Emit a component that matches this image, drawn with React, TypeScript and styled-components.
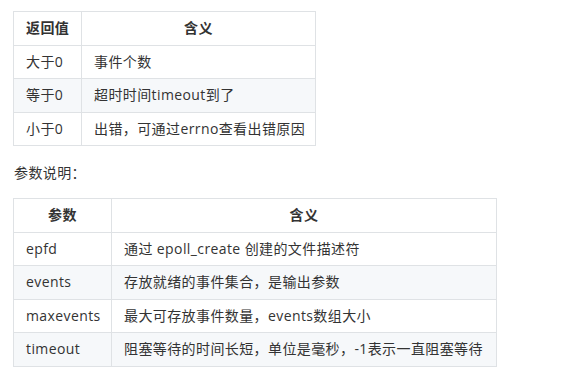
import React from "react";
import styled, { createGlobalStyle } from "styled-components";

const Global = createGlobalStyle`
  html, body { margin: 0; padding: 0; background: #ffffff; }
  body {
    font-family: "Open Sans", "Noto Sans CJK SC", sans-serif;
    font-size: 14px;
    letter-spacing: 0.4px;
    color: #333333;
  }
`;

const Page = styled.div`
  padding: 11px 0 0 13px;
  display: flex;
  flex-direction: column;
  align-items: flex-start;
`;

const Table = styled.table<{ $w: number }>`
  border-collapse: collapse;
  width: ${(p) => p.$w}px;
  table-layout: fixed;
`;

const Th = styled.th<{ $w?: number; $align?: string }>`
  ${(p) => (p.$w ? `width: ${p.$w}px;` : "")}
  border: 1px solid #dfe2e5;
  padding: 0 12px;
  height: 33.5px;
  box-sizing: border-box;
  font-weight: 700;
  text-align: ${(p) => p.$align || "center"};
  line-height: 20px;
  white-space: nowrap;
  color: #333333;
`;

const Tr = styled.tr<{ $alt?: boolean }>`
  background: ${(p) => (p.$alt ? "#f6f8fa" : "#ffffff")};
`;

const Td = styled.td`
  border: 1px solid #dfe2e5;
  padding: 0 12px;
  height: 33.5px;
  box-sizing: border-box;
  line-height: 20px;
  white-space: nowrap;
`;

const Para = styled.p`
  margin: 17px 0 15px 1px;
  line-height: 20px;
`;

const rows1 = [
  ["大于0", "事件个数"],
  ["等于0", "超时时间timeout到了"],
  ["小于0", "出错，可通过errno查看出错原因"],
];

const rows2 = [
  ["epfd", "通过 epoll_create 创建的文件描述符"],
  ["events", "存放就绪的事件集合，是输出参数"],
  ["maxevents", "最大可存放事件数量，events数组大小"],
  ["timeout", "阻塞等待的时间长短，单位是毫秒，-1表示一直阻塞等待"],
];

export default function App() {
  return (
    <>
      <Global />
      <Page>
        <Table $w={303}>
          <thead>
            <Tr>
              <Th $w={68} $align="left">返回值</Th>
              <Th>含义</Th>
            </Tr>
          </thead>
          <tbody>
            {rows1.map((r, i) => (
              <Tr key={r[0]} $alt={i % 2 === 1}>
                <Td>{r[0]}</Td>
                <Td>{r[1]}</Td>
              </Tr>
            ))}
          </tbody>
        </Table>
        <Para>参数说明：</Para>
        <Table $w={484}>
          <thead>
            <Tr>
              <Th $w={98}>参数</Th>
              <Th>含义</Th>
            </Tr>
          </thead>
          <tbody>
            {rows2.map((r, i) => (
              <Tr key={r[0]} $alt={i % 2 === 1}>
                <Td>{r[0]}</Td>
                <Td>{r[1]}</Td>
              </Tr>
            ))}
          </tbody>
        </Table>
      </Page>
    </>
  );
}
